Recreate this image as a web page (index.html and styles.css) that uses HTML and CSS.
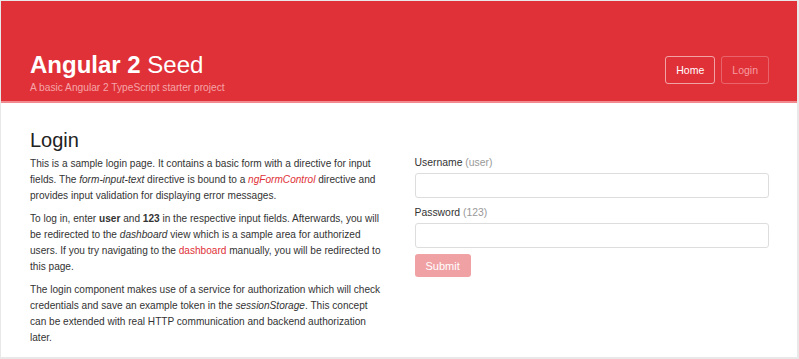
FILE: index.html
```html
<!DOCTYPE html>
<html lang="en">
<head>
<meta charset="utf-8">
<meta name="viewport" content="width=device-width,initial-scale=1">
<title>Angular 2 Seed • Login</title>
<link rel="stylesheet" href="styles.css">
</head>
<body>
<div class="frame">
  <!-- HEADER -->
  <header class="top">
    <div class="brand">
      <h1><strong>Angular 2</strong> Seed</h1>
      <p class="sub">A basic Angular 2 TypeScript starter project</p>
    </div>
    <nav class="nav">
      <a href="#" class="nav-btn active">Home</a>
      <a href="#" class="nav-btn">Login</a>
    </nav>
  </header>

  <!-- CONTENT -->
  <main class="main">
    <section class="col">
      <h2>Login</h2>
      <p>This is a sample login page. It contains a basic form with a directive for input fields. The <em>form-input-text</em> directive is bound to a <em class="red">ngFormControl</em> directive and provides input validation for displaying error messages.</p>
      <p>To log in, enter <b>user</b> and <b>123</b> in the respective input fields. Afterwards, you will be redirected to the <em>dashboard</em> view which is a sample area for authorized users. If you try navigating to the <a href="#">dashboard</a> manually, you will be redirected to this page.</p>
      <p>The login component makes use of a service for authorization which will check credentials and save an example token in the <em>sessionStorage</em>. This concept can be extended with real HTTP communication and backend authorization later.</p>
    </section>
    <section class="col">
      <form class="login" onsubmit="return false">
        <label>Username <span class="hint">(user)</span></label>
        <input type="text">
        <label>Password <span class="hint">(123)</span></label>
        <input type="password">
        <button type="submit" disabled>Submit</button>
      </form>
    </section>
  </main>
</div>
</body>
</html>
```

FILE: styles.css
```css
:root{--red:#e03138;--txt:#333;--muted:#999;--line:#e4e4e4}
*{box-sizing:border-box}
html,body{margin:0;height:100%}
body{background:#fff;color:var(--txt);font-family:"Liberation Sans",Arial,sans-serif;font-size:10px}
.frame{height:359px;border:1px solid #e8e8e8;border-width:1px 2px 2px 1px;overflow:hidden}

/* header */
.top{background:var(--red);border-bottom:2px solid #f08a8e;height:102px;padding:0 28px 0 29px;display:flex;align-items:flex-end;justify-content:space-between}
.brand{padding-bottom:6px}
.top h1{margin:0;font-size:24px;font-weight:400;color:#fff;line-height:26px}
.top h1 strong{font-weight:700}
.sub{margin:3px 0 0;color:#f5a5a8;font-size:10.2px;line-height:14px}
.nav{display:flex;gap:6px;padding-bottom:17px}
.nav-btn{display:block;height:28px;line-height:26px;padding:0 10px;border:1px solid rgba(255,255,255,.25);border-radius:3px;color:#f59ca0;text-decoration:none;font-size:10.5px}
.nav-btn.active{border-color:rgba(255,255,255,.55);color:#fff}

/* content */
.main{display:grid;grid-template-columns:1fr 1fr;gap:30px;padding:25px 28px 0 29px}
h2{margin:0 0 4px;font-size:20px;font-weight:400;color:#222;line-height:24px}
p{margin:0 0 7px;padding-right:1px;line-height:16px;font-size:10.1px}
.red,a{color:var(--red);text-decoration:none}
.login{display:flex;flex-direction:column;padding-top:28px}
label{line-height:14px;margin-bottom:3px;color:#333;font-size:10.4px}
.hint{color:var(--muted)}
input{height:25px;border:1px solid #ddd;border-radius:3px;margin-bottom:8px;font:inherit;padding:3px 8px}
button{align-self:flex-start;height:23px;padding:0 11px;border:0;border-radius:3px;background:var(--red);opacity:.45;color:#fff;font:inherit;font-size:11px;margin-top:-2px}
```
